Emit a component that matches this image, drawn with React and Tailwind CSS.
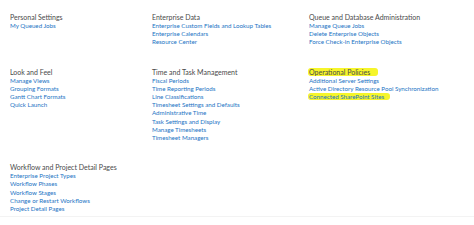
export default function App() {
  const sections = [
    { title: "Personal Settings", links: ["My Queued Jobs"] },
    { title: "Enterprise Data", links: ["Enterprise Custom Fields and Lookup Tables", "Enterprise Calendars", "Resource Center"] },
    { title: "Queue and Database Administration", links: ["Manage Queue Jobs", "Delete Enterprise Objects", "Force Check-in Enterprise Objects"] },
    { title: "Look and Feel", links: ["Manage Views", "Grouping Formats", "Gantt Chart Formats", "Quick Launch"] },
    { title: "Time and Task Management", links: ["Fiscal Periods", "Time Reporting Periods", "Line Classifications", "Timesheet Settings and Defaults", "Administrative Time", "Task Settings and Display", "Manage Timesheets", "Timesheet Managers"] },
    { title: "Operational Policies", hl: true, links: ["Additional Server Settings", "Active Directory Resource Pool Synchronization", "Connected SharePoint Sites"], hlLink: 2 },
    { title: "Workflow and Project Detail Pages", links: ["Enterprise Project Types", "Workflow Phases", "Workflow Stages", "Change or Restart Workflows", "Project Detail Pages"] },
  ];
  return (
    <div className="w-[474px] h-[225px] bg-white relative overflow-hidden" style={{ fontFamily: 'Lato, "Open Sans", sans-serif' }}>
      <div className="grid grid-cols-[142px_157px_1fr] gap-y-[20px] pl-[10px] pt-[12px]">
        {sections.map((s, i) => (
          <div key={i} className="flex flex-col">
            <div className="text-[7px] leading-[10px] text-[#4a4a4a]">
              {s.hl ? <span className="bg-[#f6f52a] rounded-[3px] pl-[1px] pr-[8px] -ml-[1px]">{s.title}</span> : s.title}
            </div>
            {s.links.map((l, j) => (
              <div key={j} className="text-[6.2px] leading-[8.2px] text-[#1a73c4] whitespace-nowrap">
                {s.hlLink === j ? <span className="bg-[#f6f52a] rounded-[3px] pl-[1px] pr-[6px] -ml-[1px]">{l}</span> : l}
              </div>
            ))}
          </div>
        ))}
      </div>
      <div className="absolute left-0 right-0 top-[216px] h-[1px] bg-[#f3f3f3]" />
    </div>
  );
}
